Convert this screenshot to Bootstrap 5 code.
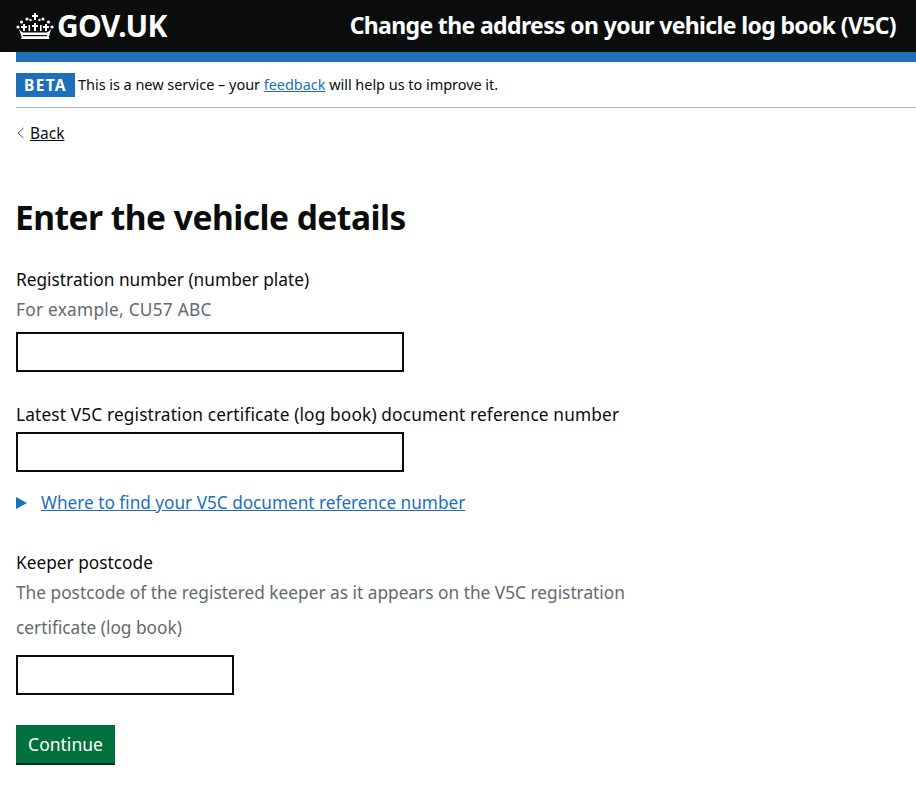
<!DOCTYPE html>
<html lang="en">
<head>
<meta charset="utf-8">
<title>Enter the vehicle details</title>
<link href="https://cdn.jsdelivr.net/npm/bootstrap@5.3.0/dist/css/bootstrap.min.css" rel="stylesheet">
<style>
body { font-family: "Noto Sans", "Liberation Sans", sans-serif; color: #0b0c0c; background: #fff; }
.gov-head { height: 52px; background: #0b0c0c; color: #fff; padding: 0 20px 0 16px; }
.gov-logo { font-size: 30px; font-weight: 700; line-height: 1; letter-spacing: -.65px; color: #fff; text-decoration: none; gap: 3px; }
.gov-logo:hover { color: #fff; }
.gov-svc { font-size: 23px; font-weight: 700; line-height: 1; letter-spacing: -.64px; color: #fff; text-decoration: none; padding-bottom: 2px; }
.gov-svc:hover { color: #fff; }
.gov-strip { height: 10px; margin-left: 16px; background: #1d70b8; }
.gov-phase { margin-left: 16px; height: 46px; border-bottom: 1px solid #b1b4b6; font-size: 14.5px; letter-spacing: -.04px; gap: 3px; padding-top: 11px; }
.gov-phase-text { line-height: 22px; }
.gov-tag { width: 59px; height: 24px; background: #1d70b8; color: #fff; font-weight: 700; font-size: 15.5px; letter-spacing: 1.3px; line-height: 24px; text-align: center; }
.gov-phase a, .gov-more { color: #1d70b8; }
.gov-main { padding: 0 16px; }
.gov-back { margin-top: 15px; height: 20px; font-size: 15.5px; line-height: 20px; gap: 5px; }
.gov-back a { color: #0b0c0c; }
.gov-title { margin: 54px 0 0 -1px; font-size: 33.5px; font-weight: 700; line-height: 40px; letter-spacing: -.5px; }
.gov-label { display: block; margin: 0; font-size: 17.3px; line-height: 25px; }
.gov-label-wide { letter-spacing: .14px; }
.gov-hint { width: 640px; color: #626a6e; font-size: 17.3px; line-height: 35px; }
.gov-hint-wide { letter-spacing: .25px; }
.gov-field { display: block; height: 40px; margin-top: 5px; border: 2px solid #0b0c0c; border-radius: 0; padding: 5px; background: #fff; outline: 0; }
.gov-w1 { width: 388px; }
.gov-w2 { width: 218px; }
.gov-more { margin-top: 18px; font-size: 17.2px; line-height: 25px; gap: 14px; }
.gov-gap-a { margin-top: 30px; }
.gov-gap-b { margin-top: 30px; }
.gov-gap-c { margin-top: 35px; }
.gov-gap-d { margin-top: 10px; }
.gov-go { display: block; width: 99px; height: 40px; margin-top: 30px; padding: 0; background: #00703c; color: #fff; border: 0; border-bottom: 2px solid #002d18; border-radius: 0; font-size: 17.5px; line-height: 38px; }
.gov-go:hover { background: #005a30; color: #fff; border-bottom: 2px solid #002d18; }
</style>
</head>
<body>
<header class="gov-head d-flex align-items-center justify-content-between">
  <a class="gov-logo d-flex align-items-center" href="#">
    <svg width="38" height="28" viewBox="0 0 38 28" fill="#fff" aria-hidden="true">
      <path d="M18 1h2v2h2v2h-2v3h-2V5h-2V3h2z"/>
      <circle cx="11" cy="7" r="1.6"/><circle cx="27" cy="7" r="1.6"/>
      <circle cx="5.5" cy="10" r="1.6"/><circle cx="32.5" cy="10" r="1.6"/>
      <circle cx="2" cy="15" r="1.6"/><circle cx="36" cy="15" r="1.6"/>
      <circle cx="14.5" cy="8" r="1.2"/><circle cx="23.5" cy="8" r="1.2"/>
      <path d="M7 12h2v2h2v2H9v3H7v-3H5v-2h2zM18 11h2v2h2v2h-2v4h-2v-4h-2v-2h2zM29 12h2v2h2v2h-2v3h-2v-3h-2v-2h2zM12.500 13h1.600v6h-1.600zM24 13h1.600v6H24z"/>
      <path d="M3 17c1 1 2 2.500 4 3.500h24c2-1 3-2.500 4-3.500l-1.500 6c0 .8-.3 1-.8 1.200l.8 2.800H5l.8-2.800c-.5-.2-.8-.4-.8-1.200z"/>
      <path d="M7 23h24v1.200H7z" fill="#0b0c0c"/>
    </svg>
    <span>GOV.UK</span>
  </a>
  <a class="gov-svc" href="#">Change the address on your vehicle log book (V5C)</a>
</header>
<div class="gov-strip"></div>
<div class="gov-phase d-flex">
  <strong class="gov-tag">BETA</strong>
  <span class="gov-phase-text">This is a new service – your <a href="#">feedback</a> will help us to improve it.</span>
</div>
<main class="gov-main">
  <div class="gov-back d-flex align-items-center">
    <svg width="9" height="12" viewBox="0 0 9 12" aria-hidden="true"><path d="M7.500 1 2 6l5.500 5" fill="none" stroke="#505a5f" stroke-width="1"/></svg>
    <a href="#">Back</a>
  </div>
  <h1 class="gov-title">Enter the vehicle details</h1>
  <form>
    <label class="gov-label gov-gap-a" for="reg">Registration number (number plate)</label>
    <div class="gov-hint gov-hint-wide">For example, CU57 ABC</div>
    <input class="gov-field gov-w1" id="reg" type="text">
    <label class="gov-label gov-label-wide gov-gap-b" for="doc">Latest V5C registration certificate (log book) document reference number</label>
    <input class="gov-field gov-w1" id="doc" type="text">
    <div class="gov-more d-flex align-items-center">
      <svg width="11" height="12" viewBox="0 0 11 12" aria-hidden="true"><path d="M0 0l11 6L0 12z" fill="#1d70b8"/></svg>
      <a class="gov-more mt-0" href="#">Where to find your V5C document reference number</a>
    </div>
    <label class="gov-label gov-gap-c" for="pc">Keeper postcode</label>
    <div class="gov-hint">The postcode of the registered keeper as it appears on the V5C registration certificate (log book)</div>
    <input class="gov-field gov-w2 gov-gap-d" id="pc" type="text">
    <button class="btn gov-go" type="submit">Continue</button>
  </form>
</main>
<script src="https://cdn.jsdelivr.net/npm/bootstrap@5.3.0/dist/js/bootstrap.bundle.min.js"></script>
</body>
</html>
